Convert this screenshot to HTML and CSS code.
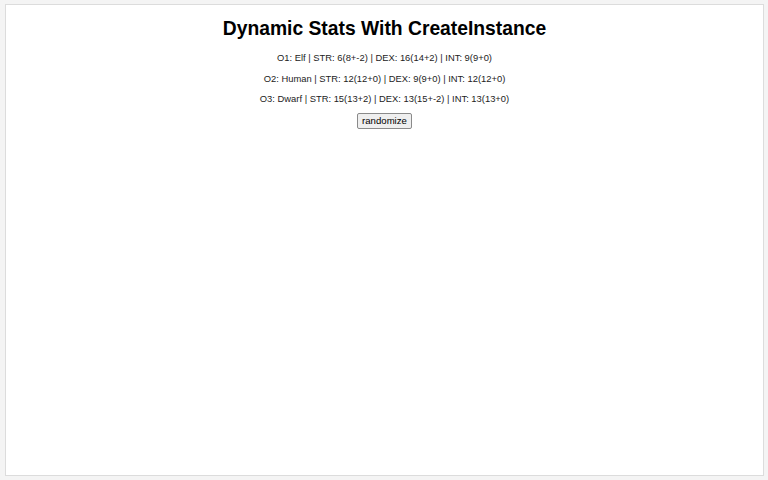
FILE: index.html
```html
<!DOCTYPE html>
<html>
<head>
  <link rel="stylesheet" href="styles.css">
</head>
<body>
  <div class="container">
    <h1>Dynamic Stats With CreateInstance</h1>
    <div id="list" class="list">
      <p class="row">O1: Elf | STR: 6(8+-2) | DEX: 16(14+2) | INT: 9(9+0)</p>
      <p class="row">O2: Human | STR: 12(12+0) | DEX: 9(9+0) | INT: 12(12+0)</p>
      <p class="row">O3: Dwarf | STR: 15(13+2) | DEX: 13(15+-2) | INT: 13(13+0)</p>
    </div>
    <button id="randomize">randomize</button>
  </div>
</body>
</html>
```

FILE: styles.css
```css
html {
  background: #f4f4f4;
}
body {
  font-family: "Liberation Sans", Arial, sans-serif;
  margin: 4px 4px 4px 5px;
  height: 472px;
}
.container {
  background: #fff;
  border: 1px solid #dcdcdc;
  height: 100%;
  box-sizing: border-box;
  display: flex;
  flex-direction: column;
  align-items: center;
  padding-top: 13px;
}
h1 {
  font-size: 19.3px;
  font-weight: bold;
  margin: 0 0 12px;
  color: #000;
}
.list {
  display: flex;
  flex-direction: column;
  align-items: center;
  gap: 8.5px;
}
.row {
  margin: 0;
  font-size: 9.4px;
  line-height: 12px;
  color: #222;
}
button {
  margin-top: 8px;
  font-family: "Liberation Sans", Arial, sans-serif;
  font-size: 9.6px;
  padding: 1px 4px 2px;
  background: #efefef;
  border: 1px solid #8a8a8a;
  border-radius: 2px;
  color: #000;
}
```
